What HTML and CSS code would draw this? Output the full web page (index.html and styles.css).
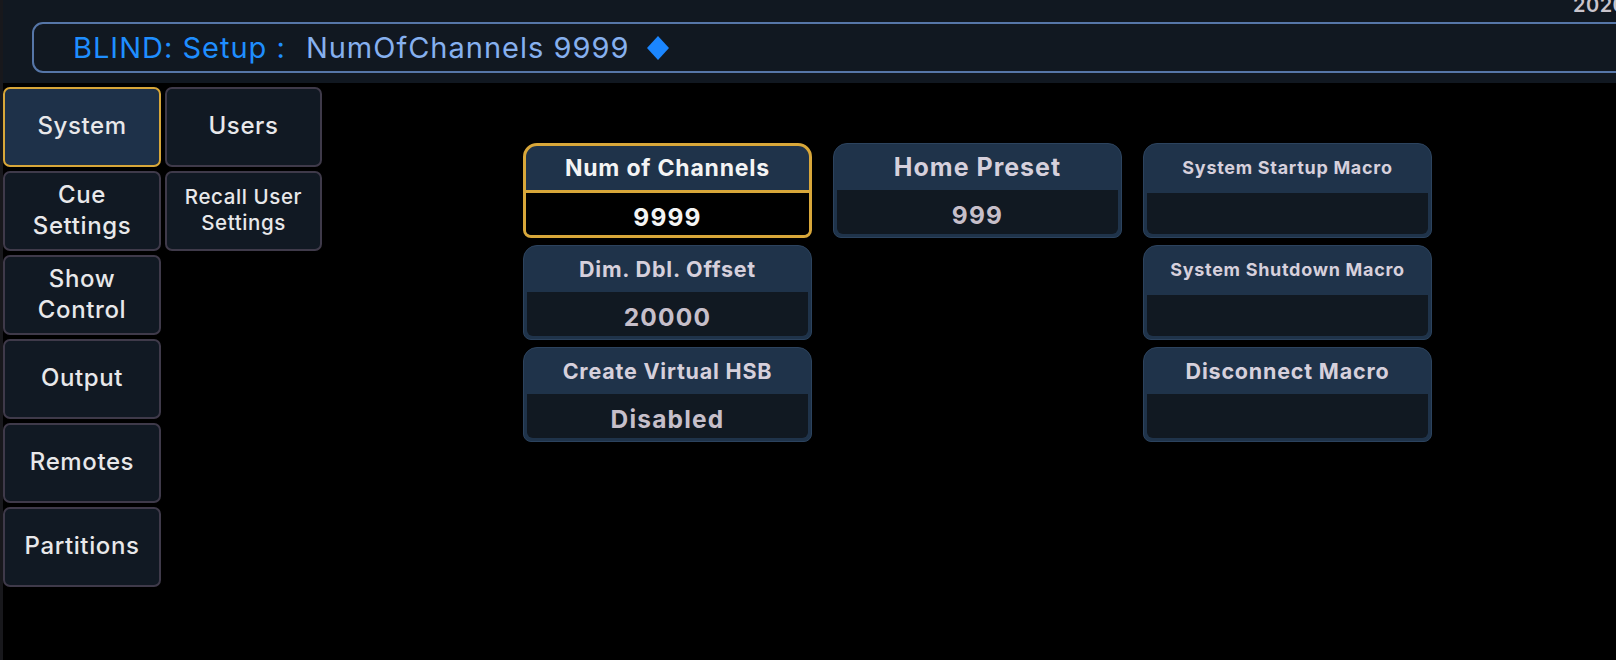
FILE: index.html
```html
<!DOCTYPE html>
<html>
<head>
<meta charset="utf-8">
<link rel="stylesheet" href="styles.css">
</head>
<body>
<div class="screen">
  <div class="top">
    <div class="status"><span class="clock">2020</span></div>
    <div class="cmdline">
      <span class="cmd-prefix">BLIND: Setup :</span>
      <span class="cmd-text">NumOfChannels 9999</span>
      <svg class="diamond" width="22" height="24" viewBox="0 0 22 24"><polygon points="11,0 22,12 11,24 0,12" fill="#1b86ff"/></svg>
    </div>
  </div>
  <div class="main">
    <nav class="nav">
      <div class="btn selected">System</div>
      <div class="btn">Users</div>
      <div class="btn">Cue<br>Settings</div>
      <div class="btn small">Recall User<br>Settings</div>
      <div class="btn">Show<br>Control</div>
      <div class="empty"></div>
      <div class="btn">Output</div>
      <div class="empty"></div>
      <div class="btn">Remotes</div>
      <div class="empty"></div>
      <div class="btn">Partitions</div>
    </nav>
    <section class="cards">
      <div class="card active">
        <div class="card-title lg">Num of Channels</div>
        <div class="card-value">9999</div>
      </div>
      <div class="card">
        <div class="card-title xl">Home Preset</div>
        <div class="card-value">999</div>
      </div>
      <div class="card">
        <div class="card-title small">System Startup Macro</div>
        <div class="card-value"></div>
      </div>
      <div class="card">
        <div class="card-title">Dim. Dbl. Offset</div>
        <div class="card-value">20000</div>
      </div>
      <div class="card-gap"></div>
      <div class="card">
        <div class="card-title small">System Shutdown Macro</div>
        <div class="card-value"></div>
      </div>
      <div class="card">
        <div class="card-title">Create Virtual HSB</div>
        <div class="card-value">Disabled</div>
      </div>
      <div class="card-gap"></div>
      <div class="card">
        <div class="card-title">Disconnect Macro</div>
        <div class="card-value"></div>
      </div>
    </section>
  </div>
</div>
</body>
</html>
```
FILE: styles.css
```css
html, body {
  margin: 0;
  padding: 0;
  background: #000;
}
body {
  width: 1616px;
  height: 660px;
  overflow: hidden;
  font-family: "Inter", "DejaVu Sans", sans-serif;
}
.screen {
  width: 1616px;
  height: 660px;
  border-left: 3px solid #18181c;
  box-sizing: border-box;
  overflow: hidden;
}
.top {
  background: #111821;
  height: 83px;
  overflow: hidden;
}
.status {
  height: 22px;
  overflow: hidden;
  padding-left: 1570px;
  white-space: nowrap;
}
.clock {
  display: block;
  font-size: 20px;
  line-height: 20px;
  font-weight: 600;
  color: #c9c4cc;
  margin-top: -5px;
  letter-spacing: 0.5px;
}
.cmdline {
  margin-left: 29px;
  margin-right: -30px;
  height: 51px;
  box-sizing: border-box;
  border: 2px solid #5676a8;
  border-radius: 11px;
  display: flex;
  align-items: center;
  padding-left: 39px;
  font-size: 29px;
  letter-spacing: 1px;
  white-space: nowrap;
}
.cmd-prefix {
  color: #1f8eff;
}
.cmd-text {
  color: #86b0ef;
  margin-left: 20px;
}
.diamond {
  margin-left: 18px;
  margin-top: 1px;
}
.main {
  display: flex;
  align-items: flex-start;
  padding-top: 4px;
}
.nav {
  display: grid;
  grid-template-columns: 158px 157px;
  grid-auto-rows: 80px;
  column-gap: 4px;
  row-gap: 4px;
}
.btn {
  box-sizing: border-box;
  background: #111923;
  border: 2px solid #3f3a4a;
  border-radius: 7px;
  color: #e8e8ea;
  font-size: 24px;
  font-weight: 500;
  letter-spacing: 0.6px;
  line-height: 31px;
  padding-bottom: 3px;
  display: flex;
  align-items: center;
  justify-content: center;
  text-align: center;
}
.btn.small {
  font-size: 20.5px;
  line-height: 26px;
}
.btn.selected {
  background: #1e3149;
  border-color: #d8a73a;
}
.cards {
  margin-left: 201px;
  margin-top: 56px;
  display: grid;
  grid-template-columns: repeat(3, 289px);
  grid-auto-rows: 95px;
  column-gap: 21px;
  row-gap: 7px;
}
.card {
  box-sizing: border-box;
  background: #1f334a;
  border: 1px solid #2c435e;
  border-radius: 14px 14px 8px 8px;
  padding: 0 3px 3px;
  display: flex;
  flex-direction: column;
  overflow: hidden;
}
.card-title {
  height: 46px;
  flex: none;
  display: flex;
  align-items: center;
  justify-content: center;
  color: #d6d0dc;
  font-size: 21.5px;
  font-weight: 700;
  letter-spacing: 0.8px;
  white-space: nowrap;
}
.card-title.lg {
  font-size: 23px;
}
.card-title.xl {
  font-size: 25px;
  letter-spacing: 1px;
}
.card-title.small {
  font-size: 18px;
  letter-spacing: 0.7px;
  padding-bottom: 3px;
}
.card-value {
  flex: 1;
  background: #111922;
  border-radius: 0 0 6px 6px;
  display: flex;
  align-items: center;
  justify-content: center;
  padding-top: 5px;
  color: #c6bfca;
  font-size: 24.5px;
  font-weight: 700;
  letter-spacing: 1.2px;
}
.card.active {
  border: 3px solid #d8a73a;
  padding: 0;
}
.card.active .card-title {
  color: #f4f4f4;
  height: 44px;
  border-bottom: 3px solid #d8a73a;
}
.card.active .card-value {
  background: #000;
  color: #f4f4f4;
  border-radius: 0;
}
```
